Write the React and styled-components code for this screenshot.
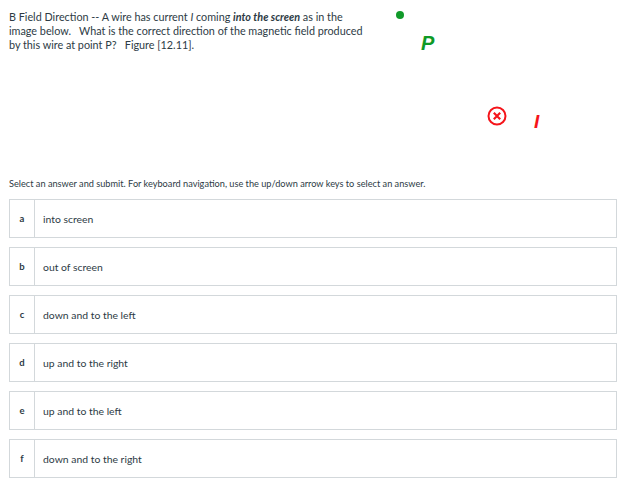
import styled, { createGlobalStyle } from "styled-components";

const Global = createGlobalStyle`
  body {
    margin: 0;
    background: #fff;
    font-family: Lato, "Liberation Sans", sans-serif;
    color: #2d3b45;
  }
`;

const Page = styled.div`
  padding: 0 6px 0 9px;
`;

const Top = styled.div`
  display: flex;
  align-items: flex-start;
  height: 178px;
`;

const Prompt = styled.p`
  width: 362px;
  flex: none;
  margin: 10px 0 0;
  font-size: 10.8px;
  line-height: 14px;
`;

const Figure = styled.svg`
  flex: none;
  margin-left: 9px;
`;

const Hint = styled.div`
  font-size: 9.2px;
  line-height: 12px;
  margin-bottom: 9px;
`;

const Options = styled.div`
  display: flex;
  flex-direction: column;
  gap: 9px;
`;

const Option = styled.div`
  display: flex;
  align-items: stretch;
  height: 39px;
  box-sizing: border-box;
  border: 1px solid #d3d8db;
  background: #fff;
`;

const Letter = styled.span`
  width: 24px;
  flex: none;
  display: flex;
  align-items: center;
  justify-content: center;
  border-right: 1px solid #d3d8db;
  font-size: 9.5px;
  font-weight: 700;
`;

const Answer = styled.span`
  display: flex;
  align-items: center;
  padding-left: 8px;
  font-size: 10.4px;
`;

const answers = [
  ["a", "into screen"],
  ["b", "out of screen"],
  ["c", "down and to the left"],
  ["d", "up and to the right"],
  ["e", "up and to the left"],
  ["f", "down and to the right"],
];

export default function App() {
  return (
    <Page>
      <Global />
      <Top>
        <Prompt>
          B Field Direction -- A wire has current <i>I</i> coming{" "}
          <b><i>into the screen</i></b> as in the image below.&nbsp;&nbsp; What is the
          correct direction of the magnetic field produced by this wire at point P?&nbsp;&nbsp;
          Figure [12.11].
        </Prompt>
        <Figure width="240" height="140" viewBox="0 0 240 140">
          <circle cx="20" cy="15" r="4" fill="#119a2a" />
          <text x="41" y="50" fill="#0f9a26" fontSize="20" fontWeight="700" fontStyle="italic"
            fontFamily="'Liberation Sans', Arial, sans-serif">P</text>
          <circle cx="117" cy="116" r="8.5" fill="none" stroke="#f5141a" strokeWidth="2" />
          <path d="M113.8 112.8 L120.2 119.2 M120.2 112.8 L113.8 119.2" stroke="#f5141a" strokeWidth="2.2" />
          <text x="154" y="128" fill="#f5141a" fontSize="19" fontWeight="700" fontStyle="italic"
            fontFamily="'Liberation Sans', Arial, sans-serif">I</text>
        </Figure>
      </Top>
      <Hint>
        Select an answer and submit. For keyboard navigation, use the up/down arrow keys to select an answer.
      </Hint>
      <Options>
        {answers.map(([k, t]) => (
          <Option key={k}>
            <Letter>{k}</Letter>
            <Answer>{t}</Answer>
          </Option>
        ))}
      </Options>
    </Page>
  );
}
